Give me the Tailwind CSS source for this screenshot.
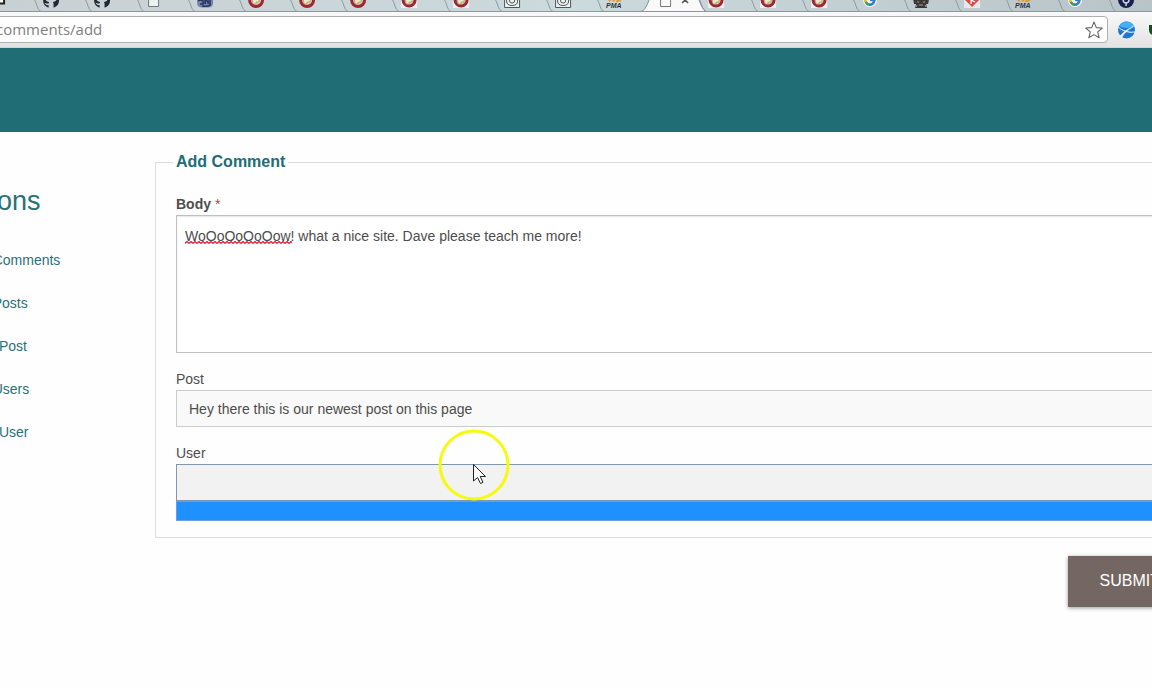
<!DOCTYPE html>
<html lang="en">
  <head>
    <meta charset="UTF-8" />
    <title>Add Comment</title>
    <script src="https://cdn.jsdelivr.net/npm/@tailwindcss/browser@4"></script>
  </head>
  <body class="min-h-screen bg-[#fefefe] overflow-hidden font-['Liberation_Sans',Arial,sans-serif] text-sm text-[#4d4d4d]">
    <!-- Tab icons, drawn around x=17 of a 51x12 tab -->
    <svg class="hidden">
      <symbol id="edge" viewBox="0 0 51 12">
        <path d="M0.500 0C3 4 3 10 7 11.500" fill="none" stroke="#8d979b" stroke-width="1" />
      </symbol>
      <symbol id="page" viewBox="0 0 51 12">
        <path d="M11.500-6H21.500V6.500H11.500Z" fill="#eef1f2" stroke="#777" />
      </symbol>
      <symbol id="dark" viewBox="0 0 51 12">
        <path d="M10-4H21V3.500H10Z" fill="#f4f6f6" stroke="#222" stroke-width="2" />
      </symbol>
      <symbol id="github" viewBox="0 0 51 12">
        <path d="M9 0A8 8 0 0 0 14.500 7.800V5C12.500 5.500 11.500 4.500 11 3.500L10.200 2.800C12 2.600 12 4 14.600 3.500L15 2C12.800 1.600 11.500 0.500 11.300-1H9ZM25 0A8 8 0 0 1 19.500 7.800V4.500C19.500 3.200 19.300 2.500 18.800 2C21 1.700 22.500 0.500 22.700-1H25Z" fill="#1f2a30" />
      </symbol>
      <symbol id="php" viewBox="0 0 51 12">
        <path d="M9-2H25V3Q25 7.500 20 7.500H13Q9 7 9 3Z" fill="#7583b0" />
        <path d="M10 1Q13-1 15 1V4H12M17-1V4M17 1H20V4M22 0V5Q20 7 14 6" fill="none" stroke="#26315a" stroke-width="1.500" />
      </symbol>
      <symbol id="cake" viewBox="0 0 51 12">
        <circle cx="17" cy="0" r="6.500" fill="#d8cf9e" stroke="#9d2637" stroke-width="3" />
        <path d="M13-2H20V2H17V4H14Z" fill="#ece8cf" stroke="#b39a68" stroke-width="0.800" />
      </symbol>
      <symbol id="cakebox" viewBox="0 0 51 12">
        <path d="M9-2H25V8H9Z" fill="#edf0ef" />
        <circle cx="17" cy="0" r="6" fill="#d8cf9e" stroke="#9d2637" stroke-width="3" />
        <path d="M13-2H20V2H17V4H14Z" fill="#ece8cf" stroke="#b39a68" stroke-width="0.800" />
      </symbol>
      <symbol id="disc" viewBox="0 0 51 12">
        <path d="M9.500-4H24.500V7.500H9.500Z" fill="#eef1f0" stroke="#4c5759" />
        <path d="M11.500-1V1Q11.500 5.500 17 5.500Q22.500 5.500 22.500 1V-1M14.500-1V1Q14.500 3 17 3Q19.500 3 19.500 1V-1" fill="none" stroke="#4c5759" />
      </symbol>
      <symbol id="pma" viewBox="0 0 51 12">
        <path d="M12 1.500L14-1M16 1.500L18-1M19 1.500L24 0" stroke="#e49b2e" stroke-width="2" />
        <text x="9" y="8" font-size="7" font-weight="bold" font-style="italic" fill="#30363f">PMA</text>
      </symbol>
      <symbol id="google" viewBox="0 0 51 12">
        <circle cx="17" cy="0" r="7" fill="#f6f8f8" />
        <path d="M12.500 1A4.800 4.800 0 0 0 17 4.800" fill="none" stroke="#3ba256" stroke-width="2.500" />
        <path d="M16 4.800Q20.500 5 21.500 0H17" fill="none" stroke="#3e79c9" stroke-width="2.500" />
        <path d="M12.300 2V-2" stroke="#e6bd36" stroke-width="2.500" />
      </symbol>
      <symbol id="cat" viewBox="0 0 51 12">
        <path d="M9-1H25L24 4H22L23 8H11L12 4H10Z" fill="#3c3835" />
        <path d="M13 2H15M19 2H21M15 5H19M12 7L13 5M22 7L21 5" stroke="#aaa39a" stroke-width="1" />
      </symbol>
      <symbol id="git" viewBox="0 0 51 12">
        <path d="M9-2H25V8H9Z" fill="#e6e9e9" />
        <path d="M9-1L17 7L25-1L17-9Z" fill="#d94a42" />
        <path d="M16-2V4M16 0L20 2" stroke="#fff" stroke-width="1.300" />
      </symbol>
      <symbol id="navy" viewBox="0 0 51 12">
        <circle cx="17" cy="0" r="8" fill="#18234b" />
        <path d="M14-1Q14 3 17 3Q20 3 20-1M17 2V6" fill="none" stroke="#ccd4e6" stroke-width="1.500" />
      </symbol>
    </svg>

    <!-- Browser tabs -->
    <div class="h-3 overflow-hidden border-b border-[#90979a] bg-linear-to-r from-[#c9d0d3] via-[#cbdadd] to-[#b9c4c8]">
      <div id="tabs" class="flex -ml-[17px] -mr-2 h-3"></div>
    </div>

    <!-- Address bar -->
    <div class="flex h-9 items-center gap-2 overflow-hidden border-b border-[#d5d3d5] bg-linear-to-b from-[#f9f9f9] to-[#e4e3e4]">
      <div class="-ml-1 flex h-[27px] flex-1 items-center rounded-sm border border-[#b0b0b0] bg-white pr-1">
        <input
          type="text"
          aria-label="Address"
          value="comments/add"
          class="-ml-px h-6 min-w-0 flex-1 bg-transparent pb-0.5 font-['Open_Sans','Noto_Sans',sans-serif] text-[15px] text-[#808080] outline-none"
        />
        <button type="button" aria-label="Bookmark">
          <svg class="size-[18px]" viewBox="0 0 18 18">
            <path d="M9 1L11.300 6.600L17.300 7L12.700 10.900L14.200 16.800L9 13.600L3.800 16.800L5.300 10.900L0.700 7L6.700 6.600Z" fill="#fff" stroke="#666" stroke-width="1.100" stroke-linejoin="round" />
          </svg>
        </button>
      </div>
      <div class="flex gap-3 w-9 shrink-0">
        <svg class="size-5 shrink-0" viewBox="0 0 20 20">
          <circle cx="10.500" cy="10" r="8.500" fill="#1c79d2" />
          <path d="M3 6Q6 1.500 11 1.500Q16 2 18 6Q10 10 3 6Z" fill="#43b0f4" />
          <path d="M2 7Q9 13 19 12Q10 14 2 7ZM4 16Q9 10 18 6Q9 11 6 17Z" fill="#fff" stroke="#fff" stroke-width="0.500" />
        </svg>
        <svg class="size-5 shrink-0" viewBox="0 0 20 20">
          <path d="M1 5H16V11Q14 16 8 16Q1 15 1 10Z" fill="#14501f" />
        </svg>
      </div>
    </div>

    <header class="h-[84px] bg-[#216d76]"></header>

    <div class="-ml-12 -mr-10 flex">
      <nav class="w-[203px] shrink-0 pt-[50px] text-[#2a7178]">
        <h3 class="text-[27px] leading-[38px]">Actions</h3>
        <ul class="mt-[30px] flex flex-col gap-[22px] pl-[15px] leading-[21px]">
          <li><a href="#">List Comments</a></li>
          <li><a href="#">List Posts</a></li>
          <li><a href="#">New Post</a></li>
          <li><a href="#">List Users</a></li>
          <li><a href="#">New User</a></li>
        </ul>
      </nav>

      <form class="flex-1 pt-[18px]">
        <fieldset class="border border-[#dddddd] px-5 pb-4 pt-5">
          <legend class="-ml-[3px] bg-[#fefefe] px-[3px] text-base font-bold text-[#216d76]">Add Comment</legend>

          <label for="body" class="block font-bold leading-[21px]">Body <span class="font-normal text-[#a84a42]">*</span></label>
          <div class="relative mb-4">
            <textarea
              id="body"
              spellcheck="false"
              class="block h-[138px] w-full resize-none border border-[#bfbfbf] bg-white px-2 py-2.5 leading-[21px] shadow-[inset_0_1px_2px_rgba(0,0,0,0.1)] outline-none"
            >WoOoOoOoOow! what a nice site. Dave please teach me more!</textarea>
            <!-- Spelling mark -->
            <svg class="absolute left-[9px] top-[26px] h-[3px] w-[107px]">
              <pattern id="wave" width="4" height="3" patternUnits="userSpaceOnUse">
                <path d="M0 2.500L2 0.500L4 2.500" fill="none" stroke="#e0203c" stroke-width="1.300" />
              </pattern>
              <rect width="107" height="3" fill="url(#wave)" />
            </svg>
          </div>

          <label for="post" class="block leading-[21px]">Post</label>
          <select id="post" class="mb-4 block h-[37px] w-full appearance-none border border-[#cccccc] bg-[#f9f9f9] px-3">
            <option>Hey there this is our newest post on this page</option>
          </select>

          <label for="user" class="block leading-[21px]">User</label>
          <div class="relative mb-5">
            <select id="user" class="block h-[37px] w-full appearance-none border border-[#8097b2] bg-[#f2f2f2] px-3">
              <option></option>
            </select>
            <div class="absolute inset-x-0 top-full h-5 border border-[#6c9fd8] bg-[#1e90ff]"></div>
            <!-- Pointer with click highlight -->
            <svg class="pointer-events-none absolute -top-9 left-[261px] size-[74px]" viewBox="0 0 74 74">
              <circle cx="37" cy="37" r="34" fill="none" stroke="#f6fa0c" stroke-width="3" />
              <path d="M36.500 36.500V53L40.500 49.500L43.500 55.500L46 54.300L43.200 48.500H48.500Z" fill="#fff" stroke="#222" />
            </svg>
          </div>
        </fieldset>
        <div class="mt-[18px] flex justify-end">
          <button type="submit" class="h-[51px] bg-[#746763] px-8 pb-0.5 text-base text-white shadow-[0_1px_4px_rgba(0,0,0,0.4)]">SUBMIT</button>
        </div>
      </form>
    </div>

    <script>
      const tabs = document.getElementById("tabs");
      const icons = [
        "dark", "github", "github", "page", "php", "cake", "cake", "cake", "cakebox", "cakebox",
        "disc", "disc", "pma", "active", "cakebox", "cakebox", "cakebox", "google", "cat", "git",
        "pma", "google", "navy",
      ];

      icons.forEach((icon) => {
        const tab = document.createElement("button");
        tab.type = "button";
        tab.className = "h-3 min-w-0 flex-1";
        if (icon === "active") {
          tab.innerHTML = `<svg class="h-3 w-full overflow-visible" viewBox="0 0 51 12">
            <path d="M-7 12Q-3 11 1 0H51Q54 9 58 12Z" fill="#f9f9f9" />
            <path d="M-7 11.500Q-3 11 1 0M51 0Q54 9 58 11.500" fill="none" stroke="#858d90" />
            <path d="M12.500-6H22.500V6.500H12.500Z" fill="#fafafa" stroke="#777" />
            <path d="M34-3L40 3M40-3L34 3" stroke="#555" stroke-width="1.500" />
          </svg>`;
        } else {
          tab.innerHTML = `<svg class="h-3 w-full" viewBox="0 0 51 12"><use href="#edge" width="51" height="12" /><use href="#${icon}" width="51" height="12" /></svg>`;
        }
        tabs.appendChild(tab);
      });
    </script>
  </body>
</html>
